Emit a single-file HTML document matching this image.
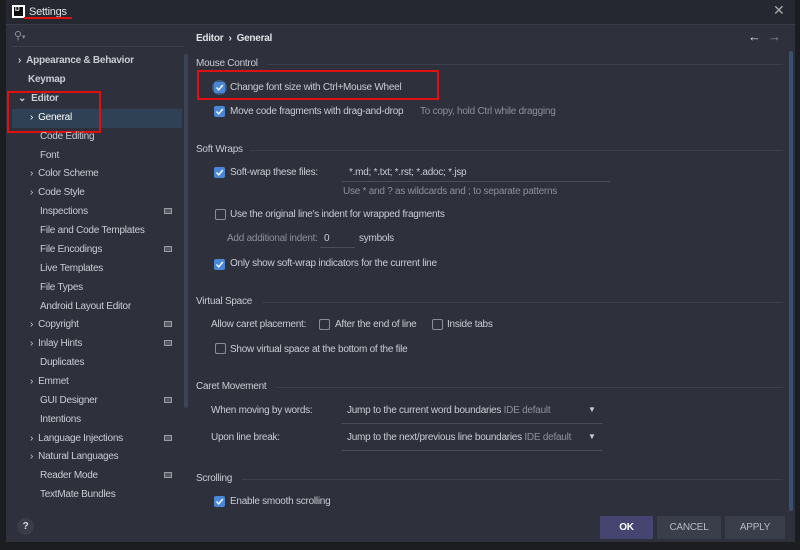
<!DOCTYPE html>
<html><head><meta charset="utf-8"><style>
*{margin:0;padding:0;box-sizing:border-box}
body{width:800px;height:550px;background:#1c1d21;font-family:"Liberation Sans",sans-serif;font-size:10px;letter-spacing:-0.25px;color:#c9ccd3;position:relative;overflow:hidden}
.win{position:absolute;left:6px;top:0;width:789px;height:542px;background:#2e313c}
.title{position:absolute;left:0;top:0;width:789px;height:25px;background:#262831;border-bottom:1px solid #3a3d48}
.a{position:absolute;white-space:nowrap;line-height:18px}
.side{position:absolute;left:0;top:26px;width:183px;height:516px;background:#2e313c}
.sel{position:absolute;left:6px;top:109px;width:170px;height:19px;background:#2e4155}
.cb{position:absolute;width:11px;height:11px;border-radius:2px;background:#4a87d6}
.cb svg{position:absolute;left:1px;top:1px}
.ucb{position:absolute;width:11px;height:11px;border:1px solid #8a8d96;border-radius:2px}
.hd{position:absolute;height:1px;background:#3d404b}
.dim{color:#8c909a}
.ic{position:absolute;width:8px;height:6px;border:1px solid #9a9da5;background:#55585f}
.btn{position:absolute;top:516px;height:23px;line-height:23px;text-align:center;font-size:10px;background:#3a3d4a;color:#b8bbc3}
.line{position:absolute;height:1px;background:#4a4d58}
</style></head><body>
<div class="win">
 <div class="title"></div>
 <div style="position:absolute;left:6px;top:5px;width:13px;height:13px;background:#fff;border:2px solid #fff"><div style="width:9px;height:9px;background:#0d0d0d;color:#fff;font-size:6px;line-height:7px;font-weight:bold;padding-left:1px">IJ</div></div>
 <div class="a" style="left:23px;top:3px;color:#e0e2e6;font-size:11px">Settings</div>
 <div style="position:absolute;left:18px;top:17px;width:48px;height:2px;background:#e01010"></div>
 <div class="a" style="left:767px;top:1px;font-size:14px;color:#aaa">✕</div>

 <div class="side"></div>
 <div class="a dim" style="left:8px;top:27px;font-size:11px">⚲<span style="font-size:7px">▾</span></div>
 <div class="hd" style="left:6px;top:46px;width:172px"></div>
 <div style="position:absolute;left:178px;top:54px;width:4px;height:354px;background:#3b4456;border-radius:2px"></div>
 <div class="sel"></div>
 <div class="a" style="left:12px;top:52px;font-weight:bold">›&nbsp;&nbsp;Appearance &amp; Behavior</div>
 <div class="a" style="left:22px;top:71px;font-weight:bold">Keymap</div>
 <div class="a" style="left:12px;top:90px;font-weight:bold">⌄&nbsp;&nbsp;Editor</div>
 <div class="a" style="left:24px;top:109px;color:#fff">›&nbsp;&nbsp;General</div>
 <div style="position:absolute;left:1px;top:91px;width:94px;height:42px;border:2px solid #e01010"></div>
 <div class="a" style="left:34px;top:128px">Code Editing</div>
 <div class="a" style="left:34px;top:147px">Font</div>
 <div class="a" style="left:24px;top:165px">›&nbsp;&nbsp;Color Scheme</div>
 <div class="a" style="left:24px;top:184px">›&nbsp;&nbsp;Code Style</div>
 <div class="a" style="left:34px;top:203px">Inspections</div><div class="ic" style="left:158px;top:208px"></div>
 <div class="a" style="left:34px;top:222px">File and Code Templates</div>
 <div class="a" style="left:34px;top:241px">File Encodings</div><div class="ic" style="left:158px;top:246px"></div>
 <div class="a" style="left:34px;top:260px">Live Templates</div>
 <div class="a" style="left:34px;top:279px">File Types</div>
 <div class="a" style="left:34px;top:298px">Android Layout Editor</div>
 <div class="a" style="left:24px;top:316px">›&nbsp;&nbsp;Copyright</div><div class="ic" style="left:158px;top:321px"></div>
 <div class="a" style="left:24px;top:335px">›&nbsp;&nbsp;Inlay Hints</div><div class="ic" style="left:158px;top:340px"></div>
 <div class="a" style="left:34px;top:354px">Duplicates</div>
 <div class="a" style="left:24px;top:373px">›&nbsp;&nbsp;Emmet</div>
 <div class="a" style="left:34px;top:392px">GUI Designer</div><div class="ic" style="left:158px;top:397px"></div>
 <div class="a" style="left:34px;top:411px">Intentions</div>
 <div class="a" style="left:24px;top:430px">›&nbsp;&nbsp;Language Injections</div><div class="ic" style="left:158px;top:435px"></div>
 <div class="a" style="left:24px;top:448px">›&nbsp;&nbsp;Natural Languages</div>
 <div class="a" style="left:34px;top:467px">Reader Mode</div><div class="ic" style="left:158px;top:472px"></div>
 <div class="a" style="left:34px;top:486px">TextMate Bundles</div>
 <div style="position:absolute;left:11px;top:518px;width:17px;height:17px;border-radius:50%;background:#3a3d48;color:#ddd;text-align:center;line-height:17px;font-weight:bold">?</div>

 <div class="a" style="left:190px;top:30px;font-weight:bold;color:#dfe1e5">Editor&nbsp;&nbsp;›&nbsp;&nbsp;General</div>
 <div class="a" style="left:742px;top:28px;font-size:13px;color:#ddd">←</div>
 <div class="a" style="left:762px;top:28px;font-size:13px;color:#888">→</div>
 <div style="position:absolute;left:783px;top:51px;width:4px;height:460px;background:#3b4f70;border-radius:2px"></div>

 <div class="a" style="left:190px;top:55px">Mouse Control</div><div class="hd" style="left:262px;top:64px;width:515px"></div>
 <div style="position:absolute;left:206px;top:80px;width:15px;height:15px;border-radius:50%;background:#3f5a80"></div>
 <div class="cb" style="left:208px;top:82px"><svg width="9" height="9"><path d="M1.5 4.5 L3.7 6.8 L7.8 2" stroke="#fff" stroke-width="1.4" fill="none"/></svg></div>
 <div class="a" style="left:224px;top:79px">Change font size with Ctrl+Mouse Wheel</div>
 <div style="position:absolute;left:191px;top:70px;width:242px;height:30px;border:2px solid #e01010"></div>
 <div class="cb" style="left:208px;top:106px"><svg width="9" height="9"><path d="M1.5 4.5 L3.7 6.8 L7.8 2" stroke="#fff" stroke-width="1.4" fill="none"/></svg></div>
 <div class="a" style="left:224px;top:103px">Move code fragments with drag-and-drop</div>
 <div class="a dim" style="left:414px;top:103px">To copy, hold Ctrl while dragging</div>

 <div class="a" style="left:190px;top:141px">Soft Wraps</div><div class="hd" style="left:244px;top:150px;width:533px"></div>
 <div class="cb" style="left:208px;top:167px"><svg width="9" height="9"><path d="M1.5 4.5 L3.7 6.8 L7.8 2" stroke="#fff" stroke-width="1.4" fill="none"/></svg></div>
 <div class="a" style="left:224px;top:164px">Soft-wrap these files:</div>
 <div class="a" style="left:343px;top:164px">*.md; *.txt; *.rst; *.adoc; *.jsp</div>
 <div class="line" style="left:336px;top:181px;width:268px"></div>
 <div class="a dim" style="left:337px;top:183px">Use * and ? as wildcards and ; to separate patterns</div>
 <div class="ucb" style="left:209px;top:209px"></div>
 <div class="a" style="left:224px;top:206px">Use the original line's indent for wrapped fragments</div>
 <div class="a dim" style="left:221px;top:230px">Add additional indent:</div>
 <div class="a" style="left:318px;top:230px">0</div>
 <div class="line" style="left:314px;top:247px;width:35px"></div>
 <div class="a" style="left:353px;top:230px">symbols</div>
 <div class="cb" style="left:208px;top:259px"><svg width="9" height="9"><path d="M1.5 4.5 L3.7 6.8 L7.8 2" stroke="#fff" stroke-width="1.4" fill="none"/></svg></div>
 <div class="a" style="left:224px;top:255px">Only show soft-wrap indicators for the current line</div>

 <div class="a" style="left:190px;top:293px">Virtual Space</div><div class="hd" style="left:256px;top:302px;width:521px"></div>
 <div class="a" style="left:205px;top:316px">Allow caret placement:</div>
 <div class="ucb" style="left:313px;top:319px"></div><div class="a" style="left:329px;top:316px">After the end of line</div>
 <div class="ucb" style="left:426px;top:319px"></div><div class="a" style="left:441px;top:316px">Inside tabs</div>
 <div class="ucb" style="left:209px;top:343px"></div><div class="a" style="left:224px;top:341px">Show virtual space at the bottom of the file</div>

 <div class="a" style="left:190px;top:378px">Caret Movement</div><div class="hd" style="left:270px;top:387px;width:507px"></div>
 <div class="a" style="left:205px;top:402px">When moving by words:</div>
 <div class="a" style="left:341px;top:402px">Jump to the current word boundaries <span class="dim">IDE default</span></div>
 <div class="a" style="left:582px;top:401px;font-size:8px">▼</div>
 <div class="line" style="left:335px;top:423px;width:262px"></div>
 <div class="a" style="left:205px;top:429px">Upon line break:</div>
 <div class="a" style="left:341px;top:429px">Jump to the next/previous line boundaries <span class="dim">IDE default</span></div>
 <div class="a" style="left:582px;top:428px;font-size:8px">▼</div>
 <div class="line" style="left:335px;top:450px;width:262px"></div>

 <div class="a" style="left:190px;top:470px">Scrolling</div><div class="hd" style="left:236px;top:479px;width:541px"></div>
 <div class="cb" style="left:208px;top:496px"><svg width="9" height="9"><path d="M1.5 4.5 L3.7 6.8 L7.8 2" stroke="#fff" stroke-width="1.4" fill="none"/></svg></div>
 <div class="a" style="left:224px;top:493px">Enable smooth scrolling</div>

 <div class="btn" style="left:594px;width:53px;background:#464470;color:#fff;font-weight:bold">OK</div>
 <div class="btn" style="left:651px;width:64px">CANCEL</div>
 <div class="btn" style="left:719px;width:60px">APPLY</div>
</div>
</body></html>
